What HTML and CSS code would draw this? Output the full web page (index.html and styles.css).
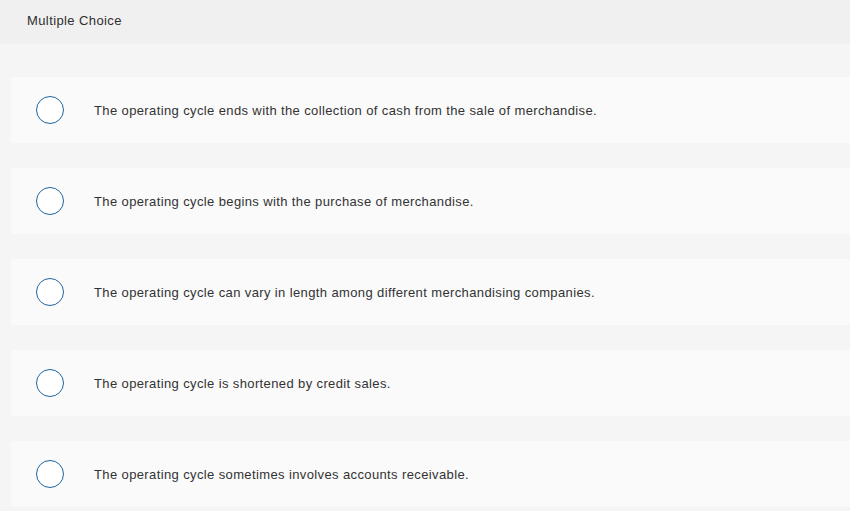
FILE: index.html
```html
<!DOCTYPE html>
<html>
<head>
<meta charset="utf-8">
<link rel="stylesheet" href="styles.css">
</head>
<body>
<div class="header">Multiple Choice</div>
<div class="options">
  <div class="option"><span class="radio"></span><span class="label">The operating cycle ends with the collection of cash from the sale of merchandise.</span></div>
  <div class="option"><span class="radio"></span><span class="label">The operating cycle begins with the purchase of merchandise.</span></div>
  <div class="option"><span class="radio"></span><span class="label">The operating cycle can vary in length among different merchandising companies.</span></div>
  <div class="option"><span class="radio"></span><span class="label">The operating cycle is shortened by credit sales.</span></div>
  <div class="option"><span class="radio"></span><span class="label">The operating cycle sometimes involves accounts receivable.</span></div>
</div>
</body>
</html>
```
FILE: styles.css
```css
html, body {
  margin: 0;
  padding: 0;
  background: #f5f5f5;
  font-family: "Liberation Sans", Arial, sans-serif;
  color: #333;
}
.header {
  height: 44px;
  background: #f0f0f0;
  padding-left: 27px;
  display: flex;
  align-items: center;
  font-size: 13px;
  letter-spacing: 0.4px;
  color: #2f2f2f;
  box-sizing: border-box;
  padding-bottom: 4px;
}
.options {
  padding: 33px 0 0 11px;
  display: flex;
  flex-direction: column;
  gap: 25px;
}
.option {
  height: 66px;
  background: #fafafa;
  border-radius: 3px 0 0 3px;
  display: flex;
  align-items: center;
  padding-left: 25px;
}
.radio {
  width: 26px;
  height: 26px;
  border: 1.3px solid #1f65a0;
  border-radius: 50%;
  background: #fff;
  flex: none;
}
.label {
  margin-left: 30px;
  font-size: 13px;
  letter-spacing: 0.38px;
  color: #333;
}
```
